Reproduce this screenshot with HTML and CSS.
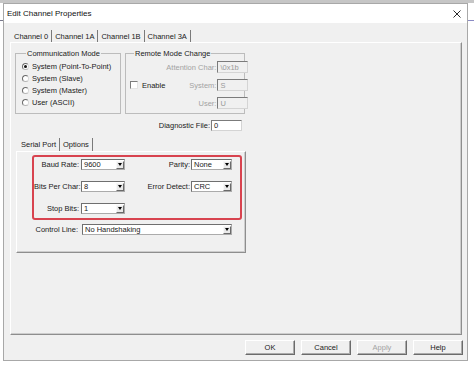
FILE: index.html
```html
<!DOCTYPE html>
<html>
<head>
<meta charset="utf-8">
<link rel="stylesheet" href="styles.css">
</head>
<body>
<div class="topband"></div>
<div class="desktop">
  <div class="edge edge-left"><i></i></div>
  <div class="window">
    <div class="titlebar">
      <span class="title">Edit Channel Properties</span>
      <svg class="close" width="8" height="8" viewBox="0 0 8 8"><path d="M0.5 0.5 L7.5 7.5 M7.5 0.5 L0.5 7.5" stroke="#2a2a2a" stroke-width="1" fill="none"/></svg>
    </div>
    <div class="client">
      <div class="tabs outer-tabs">
        <span class="tab">Channel 0</span>
        <span class="tab">Channel 1A</span>
        <span class="tab">Channel 1B</span>
        <span class="tab">Channel 3A</span>
      </div>
      <div class="panel outer-panel">
        <div class="grouprow">
          <fieldset class="group comm">
            <legend>Communication Mode</legend>
            <div class="radio-row"><span class="radio checked"></span><span>System (Point-To-Point)</span></div>
            <div class="radio-row"><span class="radio"></span><span>System (Slave)</span></div>
            <div class="radio-row"><span class="radio"></span><span>System (Master)</span></div>
            <div class="radio-row"><span class="radio"></span><span>User (ASCII)</span></div>
          </fieldset>
          <fieldset class="group remote">
            <legend>Remote Mode Change</legend>
            <div class="remote-grid">
              <span class="lbl disabled r1">Attention Char:</span>
              <span class="field dis r1">\0x1b</span>
              <span class="check-wrap"><span class="checkbox"></span><span>Enable</span></span>
              <span class="lbl disabled r2">System:</span>
              <span class="field dis r2">S</span>
              <span class="lbl disabled r3">User:</span>
              <span class="field dis r3">U</span>
            </div>
          </fieldset>
        </div>
        <div class="diag-row">
          <span class="lbl">Diagnostic File:</span>
          <span class="field diag">0</span>
        </div>
        <div class="tabs inner-tabs">
          <span class="tab">Serial Port</span>
          <span class="tab">Options</span>
        </div>
        <div class="panel inner-panel">
          <div class="highlight">
            <span class="flbl">Baud Rate:</span>
            <span class="combo"><span class="val">9600</span><span class="drop"><svg width="4" height="3" viewBox="0 0 4 3"><path d="M0 0 H4 L2 3 Z" fill="#000"/></svg></span></span>
            <span class="flbl">Parity:</span>
            <span class="combo"><span class="val">None</span><span class="drop"><svg width="4" height="3" viewBox="0 0 4 3"><path d="M0 0 H4 L2 3 Z" fill="#000"/></svg></span></span>
            <span class="flbl">Bits Per Char:</span>
            <span class="combo"><span class="val">8</span><span class="drop"><svg width="4" height="3" viewBox="0 0 4 3"><path d="M0 0 H4 L2 3 Z" fill="#000"/></svg></span></span>
            <span class="flbl">Error Detect:</span>
            <span class="combo"><span class="val">CRC</span><span class="drop"><svg width="4" height="3" viewBox="0 0 4 3"><path d="M0 0 H4 L2 3 Z" fill="#000"/></svg></span></span>
            <span class="flbl">Stop Bits:</span>
            <span class="combo"><span class="val">1</span><span class="drop"><svg width="4" height="3" viewBox="0 0 4 3"><path d="M0 0 H4 L2 3 Z" fill="#000"/></svg></span></span>
          </div>
          <div class="control-row">
            <span class="clbl">Control Line:</span>
            <span class="combo wide"><span class="val">No Handshaking</span><span class="drop"><svg width="4" height="3" viewBox="0 0 4 3"><path d="M0 0 H4 L2 3 Z" fill="#000"/></svg></span></span>
          </div>
        </div>
      </div>
      <div class="buttons">
        <span class="btn">OK</span>
        <span class="btn">Cancel</span>
        <span class="btn disabled">Apply</span>
        <span class="btn">Help</span>
      </div>
    </div>
  </div>
  <div class="edge edge-right"><i></i></div>
</div>
</body>
</html>
```
FILE: styles.css
```css
* { box-sizing: border-box; }
html, body { margin: 0; padding: 0; }
body {
  width: 474px;
  height: 367px;
  overflow: hidden;
  background: #fff;
  font-family: "Liberation Sans", Arial, sans-serif;
  font-size: 7.5px;
  color: #202020;
}
.topband { height: 3px; background: #c6c6c6; }
.desktop { display: flex; }
.edge { padding-top: 17px; }
.edge i { display: block; height: 1px; }
.edge-left { width: 3px; }
.edge-left i { background: #77778a; }
.edge-right { width: 6px; }
.edge-right i { background: #8a8ac4; }

.window {
  width: 465px;
  height: 358px;
  border: 1px solid #a8a8a8;
  display: flex;
  flex-direction: column;
}
.titlebar {
  height: 19px;
  background: #fff;
  display: flex;
  align-items: center;
  justify-content: space-between;
  padding: 0 6px 0 3px;
}
.title { font-size: 8px; color: #111; }
.close { display: block; }

.client {
  flex: 1;
  background: #f0f0f0;
  padding: 7px 0 0 6px;
}
.tabs { display: flex; }
.tab {
  display: flex;
  align-items: center;
  padding: 0 3px;
  border-right: 1px solid #7a7a7a;
}
.tab:first-child { padding-left: 0; }
.outer-tabs { height: 12px; padding-left: 4px; }

.panel {
  border: 1px solid;
  border-color: #fff #8e8e8e #8e8e8e #fff;
  box-shadow: inset -1px -1px 0 #cdcdcd;
}
.outer-panel { width: 452px; height: 293px; }

.grouprow { display: flex; gap: 4px; margin-top: 6px; padding-left: 4px; }
.group {
  margin: 0;
  height: 65px;
  border: 1px solid #bcbcbc;
  min-width: 0;
}
.group legend {
  padding: 0 1px;
  margin-left: 4px;
  line-height: 9px;
  color: #202020;
}
.comm { width: 106px; padding: 2px 0 0 6px; }
.remote { width: 120px; padding: 3px 2px 0 4px; }

.radio-row { display: flex; align-items: center; height: 12px; gap: 3px; }
.radio {
  width: 7px;
  height: 7px;
  border-radius: 50%;
  border: 1px solid;
  border-color: #6a6a6a #d8d8d8 #b4b4b4 #6a6a6a;
  background: #fff;
  display: flex;
  align-items: center;
  justify-content: center;
  flex: none;
}
.radio.checked::after {
  content: "";
  width: 3px;
  height: 3px;
  border-radius: 50%;
  background: #111;
}

.remote-grid {
  display: grid;
  grid-template-columns: 1fr auto 31px;
  grid-template-rows: repeat(3, 12px);
  row-gap: 6px;
  column-gap: 1px;
  align-items: center;
}
.r1 { grid-row: 1; }
.r2 { grid-row: 2; }
.r3 { grid-row: 3; }
.lbl { text-align: right; white-space: nowrap; }
.remote-grid .lbl { grid-column: 2; }
.remote-grid .field { grid-column: 3; }
.disabled { color: #a3a3a3; }
.check-wrap {
  grid-column: 1;
  grid-row: 2;
  display: flex;
  align-items: center;
  gap: 4px;
}
.checkbox {
  width: 8px;
  height: 8px;
  border: 1px solid;
  border-color: #7c7c7c #e4e4e4 #e4e4e4 #7c7c7c;
  background: #fff;
  flex: none;
}

.field {
  display: flex;
  align-items: center;
  height: 12px;
  border: 1px solid;
  border-color: #7b7b7b #d4d4d4 #d4d4d4 #7b7b7b;
  padding-left: 2px;
  background: #fff;
  white-space: nowrap;
  overflow: hidden;
}
.field.dis { background: #f0f0f0; color: #9a9a9a; }

.diag-row {
  width: 234px;
  display: flex;
  justify-content: flex-end;
  align-items: center;
  gap: 1px;
  margin-top: 6px;
  padding-right: 3px;
}
.field.diag { width: 31px; height: 11px; }

.inner-tabs { height: 13px; margin-top: 7px; padding-left: 10px; }
.inner-panel { width: 230px; height: 102px; margin-left: 5px; }

.highlight {
  margin: 3px 0 0 15px;
  width: 210px;
  height: 65px;
  border: 2px solid #d8434f;
  border-radius: 3px;
  padding: 2px 0 0 0;
  display: grid;
  grid-template-columns: 47px 44px 66px 41px;
  grid-template-rows: repeat(3, 11px);
  row-gap: 11px;
  align-items: center;
}
.flbl { text-align: right; padding-right: 2px; white-space: nowrap; }
.highlight .flbl:nth-child(3), .highlight .flbl:nth-child(7) { padding-right: 1px; }

.combo {
  height: 11px;
  border: 1px solid;
  border-color: #6f6f6f #ababab #ababab #6f6f6f;
  background: #fff;
  display: flex;
  align-items: center;
  justify-content: space-between;
  padding: 0 0 0 2px;
}
.val { white-space: nowrap; }
.drop {
  width: 8px;
  height: 8px;
  margin-right: 0;
  border: 1px solid;
  border-color: #f8f8f8 #6a6a6a #6a6a6a #f8f8f8;
  background: #e9e9e9;
  display: flex;
  align-items: center;
  justify-content: center;
}
.drop svg { display: block; }

.control-row { display: flex; align-items: center; gap: 4px; margin-top: 4px; }
.clbl { width: 61px; text-align: right; white-space: nowrap; }
.combo.wide { width: 150px; }

.buttons {
  display: flex;
  justify-content: flex-end;
  gap: 6px;
  margin-top: 5px;
  padding-right: 4px;
}
.btn {
  width: 50px;
  height: 15px;
  display: flex;
  align-items: center;
  justify-content: center;
  border: 1px solid;
  border-color: #fff #6b6b6b #6b6b6b #fff;
  box-shadow: inset -1px -1px 0 #ababab;
  background: #f0f0f0;
}
.btn.disabled { color: #a3a3a3; }
```
